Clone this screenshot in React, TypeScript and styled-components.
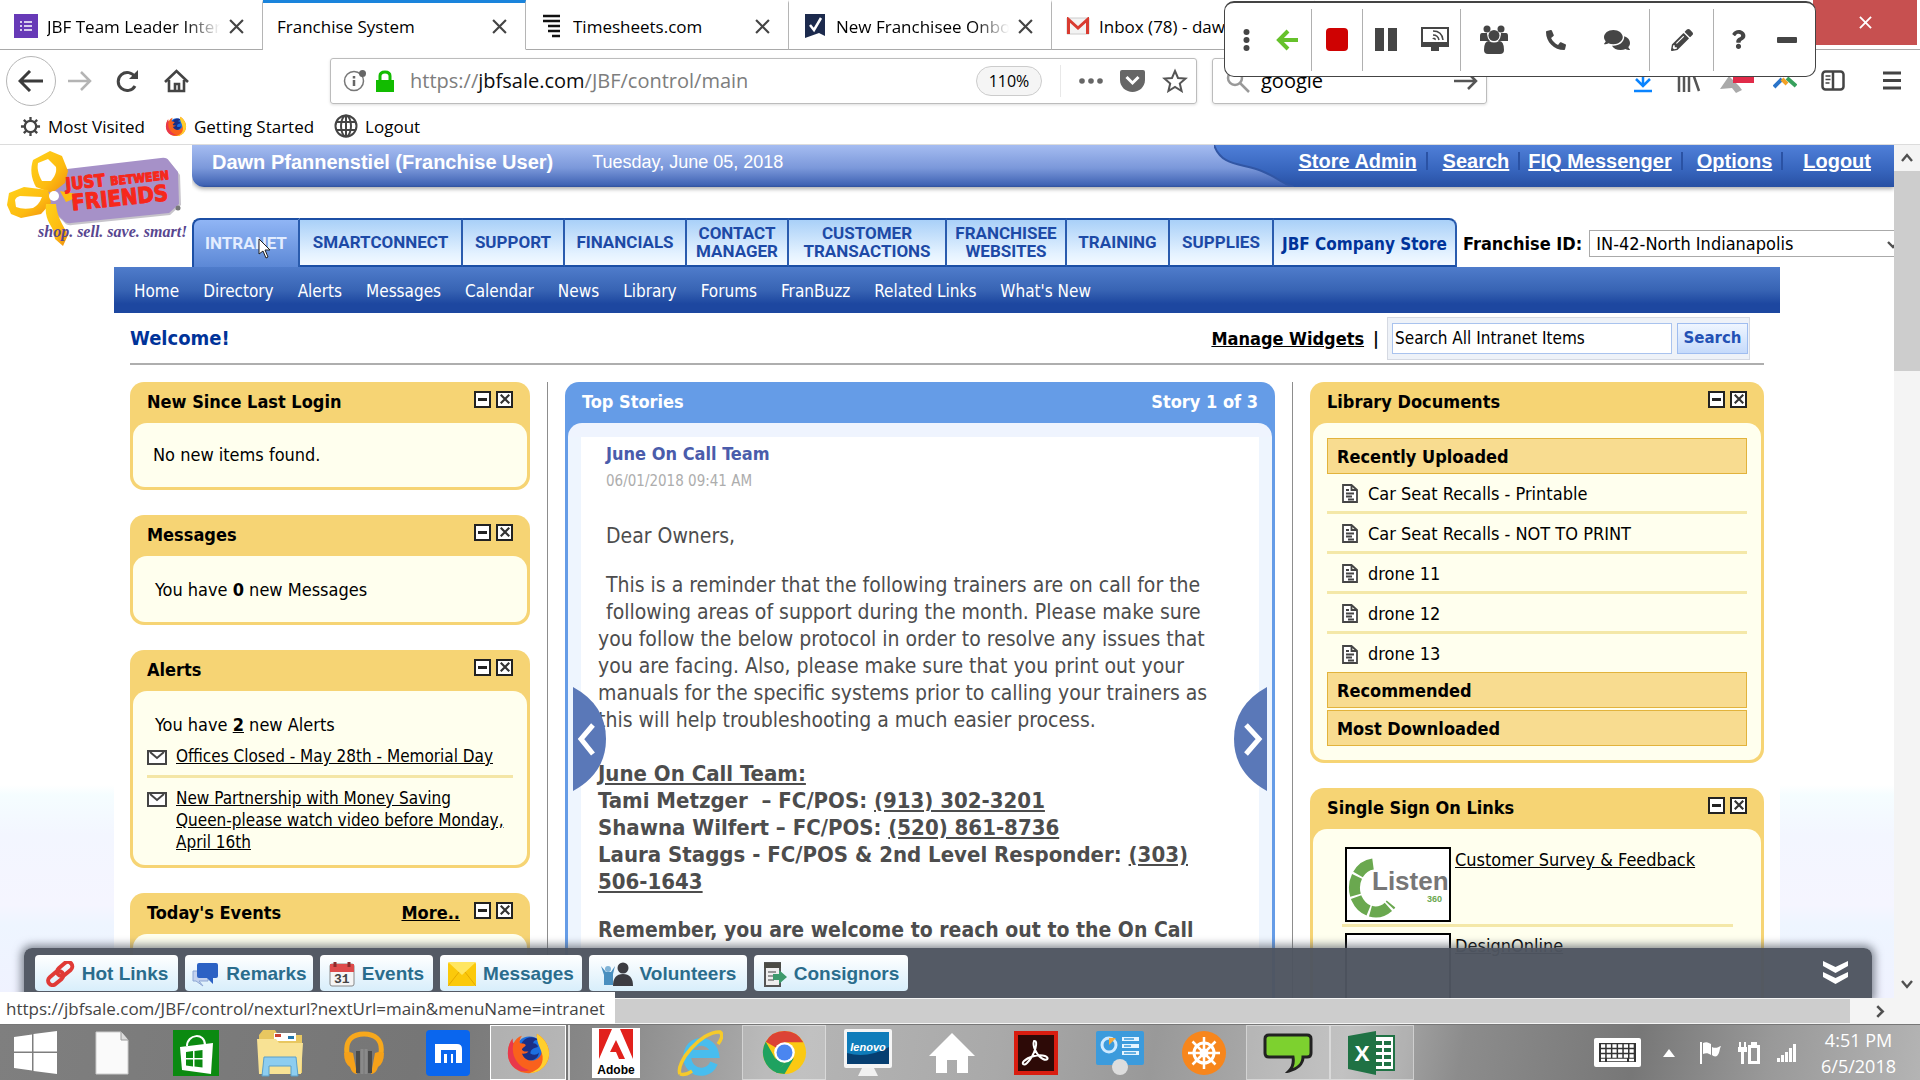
import React from "react";
import styled, { createGlobalStyle, css } from "styled-components";
import { FaPhone, FaComments, FaPencilAlt, FaQuestion } from "react-icons/fa";

const tahoma = `"DejaVu Sans Condensed", Tahoma, "Noto Sans", sans-serif`;
const segoe = `"Open Sans", "Segoe UI", "Noto Sans", sans-serif`;
const arial = `"Liberation Sans", Arial, sans-serif`;

const GlobalStyle = createGlobalStyle`
  * { box-sizing: border-box; }
  body { margin: 0; background: #fff; overflow: hidden; }
  button, input, select { font: inherit; color: inherit; margin: 0; }
  button { padding: 0; border: 0; background: none; cursor: pointer; }
  a { color: inherit; }
  h1, h2, h3, p, ul { margin: 0; padding: 0; font-weight: inherit; font-size: inherit; }
  ul { list-style: none; }
  svg { display: block; flex: none; }
`;

const Screen = styled.div`
  position: relative;
  display: flex;
  flex-direction: column;
  height: 100vh;
  overflow: hidden;
  font-family: ${tahoma};
  color: #000;
`;

/* ---------- Browser chrome ---------- */

const TabStrip = styled.div`
  display: flex;
  height: 50px;
  flex: none;
  font: 17px ${segoe};
`;

const BrowserTab = styled.div<{ $active?: boolean }>`
  display: flex;
  align-items: center;
  gap: 9px;
  width: 263px;
  flex: none;
  padding: 0 18px 0 14px;
  border-right: 1px solid #b5b5b5;
  border-bottom: 1px solid ${(p) => (p.$active ? "transparent" : "#a9a9a9")};
  border-top: 3px solid ${(p) => (p.$active ? "#1a84dc" : "transparent")};
`;

const TabLabel = styled.span<{ $fade?: boolean }>`
  flex: 1;
  overflow: hidden;
  white-space: nowrap;
  ${(p) =>
    p.$fade &&
    css`
      mask-image: linear-gradient(to right, #000 80%, transparent);
    `}
`;

const StripRest = styled.div`
  flex: 1;
  display: flex;
  justify-content: flex-end;
  align-items: flex-start;
  border-bottom: 1px solid #a9a9a9;
  padding-right: 3px;
`;

const WindowClose = styled.button`
  width: 104px;
  height: 45px;
  background: #c75050;
  display: grid;
  place-items: center;
`;

const NavBar = styled.div`
  display: flex;
  align-items: center;
  height: 58px;
  flex: none;
  padding: 3px 19px 0 6px;
  font: 20px ${segoe};
`;

const BackButton = styled.button`
  width: 50px;
  height: 50px;
  border: 1px solid #b6b6b6;
  border-radius: 50%;
  display: grid;
  place-items: center;
  flex: none;
`;

const NavButton = styled.button`
  width: 48px;
  height: 48px;
  display: grid;
  place-items: center;
  flex: none;
`;

const UrlBox = styled.div`
  display: flex;
  align-items: center;
  width: 867px;
  height: 46px;
  margin-left: 130px;
  padding: 0 8px 0 12px;
  border: 1px solid #bcbcbc;
  border-radius: 3px;
  box-shadow: 0 1px 3px #0002;
  gap: 9px;
`;

const UrlText = styled.div`
  flex: 1;
  margin-left: 6px;
  color: #7d7d7d;
  white-space: nowrap;
  b { font-weight: 400; color: #0c0c0d; }
`;

const ZoomPill = styled.button`
  width: 66px;
  height: 30px;
  border: 1px solid #ccc;
  border-radius: 15px;
  background: #f5f5f5;
  font-size: 16px;
  line-height: 26px;
`;

const PillRule = styled.span`
  width: 1px;
  height: 32px;
  background: #e8e8e8;
  margin: 0 9px;
`;

const UrlActions = styled.span`
  display: flex;
  align-items: center;
  gap: 17px;
`;

const SearchBox = styled.label`
  display: flex;
  align-items: center;
  width: 275px;
  height: 46px;
  margin-left: 15px;
  padding: 0 8px 0 13px;
  gap: 11px;
  border: 1px solid #bcbcbc;
  border-radius: 3px;
  box-shadow: 0 1px 3px #0002;
  input { flex: 1; min-width: 0; border: 0; outline: 0; padding: 0; background: none; }
`;

const ToolIcons = styled.div`
  display: flex;
  flex: 1;
  justify-content: flex-end;
  align-items: center;
  gap: 24px;
  svg:last-child { margin-left: 14px; }
`;

const Bookmarks = styled.nav`
  display: flex;
  align-items: center;
  height: 37px;
  flex: none;
  padding: 0 20px;
  gap: 20px;
  border-bottom: 1px solid #dcdcdc;
  font: 17px ${segoe};
`;

const Bookmark = styled.a`
  display: flex;
  align-items: center;
  gap: 7px;
  text-decoration: none;
`;

const Viewport = styled.div`
  display: flex;
  flex: 1;
  min-height: 0;
`;

const VScroll = styled.div`
  display: flex;
  flex-direction: column;
  align-items: center;
  width: 26px;
  flex: none;
  background: #f4f4f4;
  padding: 0 0 8px;
`;

const VThumb = styled.div`
  width: 100%;
  height: 200px;
  margin-bottom: auto;
  background: #cdcdcd;
`;

const ScrollCell = styled.button`
  display: grid;
  place-items: center;
  width: 26px;
  height: 26px;
  flex: none;
`;

const HScroll = styled.div`
  display: flex;
  align-items: center;
  height: 26px;
  flex: none;
  background: #f4f4f4;
  padding: 0 33px 0 26px;
`;

const HThumb = styled.div`
  flex: 1;
  height: 24px;
  background: #cdcdcd;
  margin-right: 24px;
`;

/* ---------- Web page ---------- */

const Page = styled.main`
  position: relative;
  flex: 1;
  min-width: 0;
  overflow: hidden;
  background: linear-gradient(#fff 0, #fff 640px, #f5fdff 650px, #f3f6ff 690px, #f5f5ff 760px, #eef5ff 780px, #f0f2ff 100%);
`;

const SiteHeader = styled.header`
  display: flex;
  height: 122px;
  background: #fff;
`;

const LogoBox = styled.a`
  width: 192px;
  flex: none;
`;

const HeaderMain = styled.div`
  display: flex;
  flex-direction: column;
  justify-content: space-between;
  flex: 1;
  min-width: 0;
  overflow: hidden;
`;

const UserBar = styled.div`
  display: flex;
  height: 42px;
  background: linear-gradient(#a5bcf1, #7b98da 55%, #4063b4 95%, #2f509c);
  border-bottom-left-radius: 12px;
  box-shadow: 0 2px 4px #0005;
  color: #fff;
  font: 18px ${arial};
`;

const UserText = styled.div`
  display: flex;
  align-items: center;
  flex: 1;
  gap: 39px;
  padding: 0 0 8px 20px;
  white-space: nowrap;
  b { font-size: 20px; }
`;

const UserLinks = styled.nav`
  display: flex;
  align-items: center;
  padding: 0 19px 10px 0;
  background: linear-gradient(#4f7fd8, #3765bd 60%, #2850a3);
  font: bold 20px ${arial};
  white-space: nowrap;
  a { padding: 0 4px; }
`;

const LinkRule = styled.span<{ $gap: number }>`
  width: 2px;
  height: 18px;
  margin: 0 ${(p) => p.$gap}px 0 5px;
  background: #2a52a4;
`;

const TabRow = styled.div`
  display: flex;
  align-items: stretch;
  height: 49px;
`;

const SiteTab = styled.a<{ $w: number; $active?: boolean; $store?: boolean }>`
  display: flex;
  align-items: center;
  justify-content: center;
  width: ${(p) => p.$w}px;
  flex: none;
  text-align: center;
  text-decoration: none;
  white-space: pre-line;
  font: bold 17px / 18px Roboto, ${arial};
  color: #1d4aa6;
  padding-bottom: 2px;
  background: linear-gradient(#a9d0f8, #e4f2ff 75%, #f4faff);
  border-top: 2px solid #1c4fa5;
  border-right: 2px solid #2a5cae;
  border-bottom: 2px solid #1c4fa5;
  ${(p) =>
    p.$active &&
    css`
      color: #e3edff;
      background: linear-gradient(#90b5f5, #5c88d6);
      border-left: 2px solid #1c4fa5;
      border-bottom: 0;
      border-top-left-radius: 8px;
    `}
  ${(p) =>
    p.$store &&
    css`
      font: bold 17px ${tahoma};
      color: #003399;
      padding: 2px 0 0;
      border-top-right-radius: 8px;
    `}
`;

const FranchisePicker = styled.label`
  display: flex;
  align-items: center;
  flex: none;
  gap: 7px;
  margin-left: 6px;
  padding-top: 2px;
  font: bold 18px ${tahoma};
  white-space: nowrap;
`;

const SelectWrap = styled.span`
  position: relative;
  width: 316px;
  font-weight: 400;
  select {
    width: 100%;
    height: 27px;
    appearance: none;
    border: 1px solid #aaa;
    background: #fff;
    padding: 0 6px;
  }
  svg { position: absolute; right: 6px; top: 9px; }
`;

const Container = styled.div`
  margin: 0 114px;
  background: #fff;
`;

const SubNav = styled.nav`
  display: flex;
  align-items: center;
  height: 46px;
  padding: 2px 20px 0;
  gap: 24px;
  background: linear-gradient(#4f7ccb, #3864b4 50%, #1d47a0 80%);
  color: #fff;
  font-size: 17px;
  a { text-decoration: none; white-space: nowrap; }
`;

const Inner = styled.div`
  padding: 0 16px;
`;

const WelcomeRow = styled.div`
  display: flex;
  align-items: center;
  height: 52px;
  padding: 0 14px 0 0;
  border-bottom: 2px solid #aeaeae;
  font-weight: 700;
  font-size: 18px;
  h1 { flex: 1; color: #003399; font-size: 20px; }
`;

const SearchFrame = styled.form`
  display: flex;
  gap: 5px;
  margin-left: 8px;
  padding: 5px 1px 5px 4px;
  border: 1px solid #d5d9e2;
  background: #eef2f8;
  input {
    width: 280px;
    height: 31px;
    border: 1px solid #a9c3ee;
    padding: 0 2px;
    font-weight: 400;
    font-size: 17px;
  }
  button {
    width: 71px;
    height: 31px;
    border: 1px solid #9fbdf0;
    background: linear-gradient(#eff6ff, #c5dafb);
    color: #2351b5;
    font: bold 15px "DejaVu Sans", sans-serif;
  }
`;

const Pipe = styled.span`
  margin-left: 9px;
`;

const Columns = styled.div`
  display: grid;
  grid-template-columns: 400px 1px minmax(0, 1fr) 1px 454px;
  column-gap: 17px;
  padding-top: 17px;
`;

const ColumnRule = styled.div`
  background: #8d8d8d;
`;

const Column = styled.div`
  display: flex;
  flex-direction: column;
  gap: 25px;
`;

const Card = styled.section<{ $blue?: boolean }>`
  border-radius: 14px;
  background: ${(p) => (p.$blue ? "#659ce7" : "#f6d474")};
  padding: 0 3px 3px;
`;

const CardHead = styled.header<{ $blue?: boolean }>`
  display: flex;
  align-items: center;
  height: 41px;
  gap: 5px;
  padding: 0 14px 3px 14px;
  font-weight: 700;
  font-size: 18px;
  color: ${(p) => (p.$blue ? "#fff" : "#000")};
  h2 { flex: 1; }
  a { margin-right: 9px; }
`;

const BoxButton = styled.button`
  display: grid;
  place-items: center;
  width: 17px;
  height: 17px;
  border: 2px solid #222;
  background: #fff;
  margin-bottom: 4px;
`;

const CardBody = styled.div<{ $h?: number; $pad?: string }>`
  min-height: ${(p) => p.$h ?? 0}px;
  border-radius: 14px 14px 12px 12px;
  background: #ffffee;
  padding: ${(p) => p.$pad ?? "18px 14px"};
  font-size: 18px;
  line-height: 22px;
`;

const Indented = styled.p`
  padding-left: 8px;
`;

const AlertList = styled.ul`
  margin-top: 9px;
  font-size: 17px;
`;

const AlertItem = styled.li`
  display: flex;
  gap: 9px;
  line-height: 22px;
  & + & { margin-top: 8px; padding-top: 9px; border-top: 3px solid #f4e6a6; }
  a { white-space: pre; }
  svg { margin-top: 5px; }
`;

const Section = styled.h3`
  display: flex;
  align-items: center;
  height: 36px;
  padding: 2px 0 0 9px;
  border: 1px solid #e2b33c;
  background: #f8dc90;
  font-weight: 700;
  & + & { margin-top: 2px; }
`;

const DocRow = styled.li`
  display: flex;
  align-items: center;
  gap: 10px;
  height: 40px;
  padding: 2px 0 0 15px;
  border-bottom: 3px solid #f4e8a8;
  &:last-child { border-bottom: 0; height: 38px; }
  a { text-decoration: none; }
`;

const SsoRow = styled.li`
  display: flex;
  gap: 4px;
  height: 86px;
  margin-right: 14px;
  padding: 6px 0 0 3px;
  border-bottom: 3px solid #f4e8a8;
  a { padding-top: 2px; }
  span {
    width: 106px;
    height: 75px;
    border: 2px solid #000;
    background: #fff;
  }
`;

const StoryBody = styled.div`
  position: relative;
  min-height: 640px;
  border-radius: 14px;
  background: linear-gradient(#eff4fe 14px, transparent 14px),
    linear-gradient(90deg, #eef5fe 13px, #fff 13px, #fff calc(100% - 13px), #eef5fe calc(100% - 13px));
  padding: 20px 30px 0;
`;

const StoryTitle = styled.h3`
  padding-left: 8px;
  font-weight: 700;
  font-size: 18px;
  line-height: 22px;
  color: #4a5cab;
`;

const StoryDate = styled.p`
  padding: 6px 0 0 8px;
  font-size: 15px;
  line-height: 20px;
  color: #adadad;
`;

const StoryText = styled.div`
  padding-top: 32px;
  font-size: 21px;
  line-height: 27px;
  color: #4d4d4d;
  white-space: nowrap;
`;

const Para = styled.p<{ $gap?: number; $size?: number }>`
  margin-top: ${(p) => p.$gap ?? 0}px;
  font-size: ${(p) => p.$size ?? 21}px;
`;

const Lead = styled.span<{ $below?: boolean }>`
  display: block;
  padding: 0 0 ${(p) => (p.$below ? 22 : 0)}px 8px;
`;

const StoryArrow = styled.button<{ $side: "left" | "right" }>`
  position: absolute;
  top: 264px;
  ${(p) => p.$side}: 5px;
  width: 33px;
  height: 104px;
`;

/* ---------- Page dock ---------- */

const Dock = styled.div`
  position: absolute;
  left: 24px;
  right: 22px;
  bottom: 0;
  display: flex;
  align-items: flex-start;
  gap: 7px;
  height: 50px;
  padding: 7px 24px 0 11px;
  border-radius: 8px 8px 0 0;
  background: rgba(78, 85, 96, 0.97);
  box-shadow: 0 0 8px 3px #4e5560aa;
`;

const DockButton = styled.button<{ $w: number }>`
  display: flex;
  align-items: center;
  justify-content: center;
  gap: 7px;
  width: ${(p) => p.$w}px;
  height: 36px;
  padding-top: 2px;
  border-radius: 4px;
  background: linear-gradient(#fff, #d8eefb);
  color: #2a6c8c;
  font: bold 19px ${arial};
`;

const DockToggle = styled.button`
  margin: 6px 0 0 auto;
`;

const StatusTip = styled.div`
  position: absolute;
  left: 0;
  bottom: 56px;
  height: 32px;
  padding: 0 10px 0 6px;
  background: #fff;
  color: #444;
  font: 17px / 34px ${segoe};
`;

const Pointer = styled.svg`
  position: absolute;
  left: 258px;
  top: 238px;
`;

/* ---------- Floating recorder ---------- */

const Recorder = styled.div`
  position: absolute;
  top: 1px;
  right: 104px;
  display: flex;
  align-items: center;
  width: 592px;
  height: 76px;
  border: 1px solid #444;
  border-top-width: 2px;
  border-radius: 10px;
  background: #fff;
  color: #454545;
`;

const RecGroup = styled.div<{ $w: number }>`
  display: flex;
  align-items: center;
  justify-content: space-around;
  width: ${(p) => p.$w}px;
  height: 62px;
  & + & { border-left: 1px solid #b0b0b0; }
  &:first-child { padding-left: 5px; }
`;

const Handset = styled(FaPhone)`
  transform: scaleX(-1);
`;

/* ---------- Taskbar ---------- */

const Taskbar = styled.footer`
  display: flex;
  height: 56px;
  flex: none;
  border-top: 1px solid #777;
  background: linear-gradient(100deg, #7f7f7f 0, #767676 22%, #8a8a8a 32%, #b4b4b4 42%, #a9a9a9 52%, #999 60%, #b5b5b5 70%, #8c8c8c 76%, #777 85%, #999 92%, #b4b4b4 100%);
  color: #fff;
  font: 17px ${segoe};
`;

const Start = styled.button`
  display: grid;
  place-items: center;
  width: 70px;
`;

const Task = styled.button<{ $open?: boolean; $front?: boolean }>`
  display: grid;
  place-items: center;
  width: 84px;
  ${(p) =>
    p.$open &&
    css`
      background: #ffffff2e;
      box-shadow: inset 0 0 0 1px #ffffff66;
    `}
  ${(p) =>
    p.$front &&
    css`
      width: 76px;
      margin-right: 8px;
      background: #ffffff66;
      box-shadow: inset 0 0 0 1px #fff, 2px 0 0 #777, 4px 0 0 #ddd;
    `}
`;

const Tray = styled.div`
  display: flex;
  align-items: center;
  gap: 16px;
  margin-left: auto;
  padding-right: 24px;
`;

const TrayUp = styled.button`
  padding: 0 9px 0 6px;
`;

const Clock = styled.div`
  padding-left: 8px;
  text-align: center;
  font-size: 18px;
  line-height: 26px;
`;

/* ---------- Icons ---------- */

const Cross = ({ s = 15, c = "#444", w = 2 }) => (
  <svg width={s} height={s} viewBox="0 0 14 14" stroke={c} strokeWidth={w} fill="none">
    <path d="M1 1l12 12M13 1L1 13" />
  </svg>
);

const Chevron = ({ d, s = 12 }: { d: string; s?: number }) => (
  <svg width={s} height={s} viewBox="0 0 12 12" fill="none" stroke="#505050" strokeWidth="2.4">
    <path d={d} />
  </svg>
);

const Firefox = ({ s }: { s: number }) => (
  <svg width={s} height={s} viewBox="0 0 48 48">
    <circle cx="25" cy="22" r="15" fill="#1c6fe0" />
    <path d="M18 12c4-5 12-6 17-1-4-1-6 1-6 3 3 0 5 2 5 4-5 1-8 3-8 7 3 2 7 2 9-1 0 7-9 11-16 7-5-3-7-12-1-19z" fill="#1a2f86" />
    <path d="M33 4c5 3 13 10 13 21 0 12-10 21-22 21S2 37 2 25C2 18 4 13 7 9c0 2 0 4 1 5 2-4 5-7 9-8-2 3-3 6-2 8 3 0 6 1 6 2 0 2-4 3-4 5 1 2 4 2 7 2-2 2-5 3-7 2 2 6 8 9 14 7 6-2 9-9 6-15-1-5-5-7-4-13z" fill="#f9611c" />
    <path d="M33 4c5 3 13 10 13 21 0 12-10 21-21 21 9-3 15-8 14-18-1-8-7-14-6-24z" fill="#ffcf2d" />
    <path d="M2 25c0-7 2-12 5-16 0 2 0 4 1 5-3 12 3 25 17 29C12 47 2 37 2 25z" fill="#e32b5b" opacity=".75" />
  </svg>
);

const Doc = () => (
  <svg width="16" height="19" viewBox="0 0 16 19" fill="#fff" stroke="#444" strokeWidth="1.8">
    <path d="M1 1h8.500l5.500 5v12H1zM9.500 1v5H15" />
    <path d="M4 6h3M4 9.500h8M4 12.500h6M6 15.500h6" />
  </svg>
);

const Envelope = () => (
  <svg width="20" height="15" viewBox="0 0 20 15" fill="#fff" stroke="#444" strokeWidth="2">
    <path d="M1 1h18v13H1z" />
    <path d="M3 2l7 6 7-6" fill="none" />
  </svg>
);

const Logo = () => (
  <svg width="190" height="106" viewBox="0 0 190 106">
    <defs>
      <linearGradient id="ribbon" x1="0" y1="0" x2="1" y2="1">
        <stop offset="0" stopColor="#ffd21a" /><stop offset=".6" stopColor="#fdbb10" /><stop offset="1" stopColor="#f08c10" />
      </linearGradient>
    </defs>
    <path d="M48 44L68 26l94-12q5-1 8 3l10 13 1 30-11 10-98 10q-5 1-8-3L46 61z" fill="#8f8a98" opacity=".5" />
    <path d="M47 43L67 24l94-11q6-1 8 3l9 11 1 32-10 9-98 10q-5 1-8-3L45 59z" fill="#a691c8" />
    <path d="M36 42c-5-9-6-18-3-27L50 6l12 5 6 15-3 12-13 10z" fill="url(#ribbon)" />
    <path d="M42 36c-4-7-5-13-4-18l10-4 8 8c1 6-2 10-5 14z" fill="#fff" />
    <path d="M48 45L24 42 9 48 7 60l4 9 10 4 20-4 10-11z" fill="url(#ribbon)" />
    <path d="M42 52L20 51q-4 1-5 4l1 7q7 3 17 1 6-3 9-11z" fill="#fff" />
    <path d="M46 59c-2 14 5 21 7 26l2 9 8 7 5-11c-5-10-11-18-12-31z" fill="url(#ribbon)" />
    <path d="M60 46l22 4-16 7z" fill="#fdbb10" />
    <circle cx="54" cy="51" r="5" fill="#fff" />
    <g transform="rotate(-6 66 44)" fill="#f6281b" stroke="#f6281b" strokeWidth="1" strokeLinejoin="round" fontFamily="DejaVu Sans Condensed" fontWeight="700">
      <text x="66" y="45" fontSize="17">JUST</text>
      <text x="111" y="45" fontSize="12">BETWEEN</text>
      <text x="70" y="66" fontSize="22">FRIENDS</text>
    </g>
    <circle cx="178" cy="63" r="2.500" fill="#777" />
    <text x="38" y="92" fontFamily="Liberation Serif" fontStyle="italic" fontWeight="700" fontSize="16" fill="#58468f">shop. sell. save. smart!</text>
  </svg>
);

const People = () => (
  <svg width="28" height="30" viewBox="0 0 28 30" fill="#454545">
    <circle cx="7" cy="4" r="3.500" /><circle cx="21" cy="4" r="3.500" />
    <circle cx="14" cy="10.500" r="5.500" />
    <path d="M0 16V11q0-3 2-3h5q0 5 3 8zM28 16v-5q0-3-2-3h-5q0 5-3 8z" />
    <path d="M4 25q0-9 5-9 5 3 10 0 5 0 5 9 0 4-4 4H8q-4 0-4-4z" />
  </svg>
);

const DockIcon = ({ kind }: { kind: string }) => {
  switch (kind) {
    case "link":
      return (
        <svg width="30" height="26" viewBox="0 0 30 26" fill="none" stroke="#e03a36" strokeWidth="4">
          <rect x="11" y="4" width="17" height="9" rx="4.500" transform="rotate(-40 19 8)" />
          <rect x="2" y="13" width="17" height="9" rx="4.500" transform="rotate(-40 10 17)" />
        </svg>
      );
    case "remarks":
      return (
        <svg width="28" height="25" viewBox="0 0 28 25">
          <path d="M2 9h15v10H8l4 5-7-5H2z" fill="#c3d2ee" stroke="#8ca6d4" />
          <path d="M8 1h17q2 0 2 2v11q0 2-2 2h-3v6l-6-6H8q-2 0-2-2V3q0-2 2-2z" fill="#2c62c4" />
        </svg>
      );
    case "events":
      return (
        <svg width="26" height="26" viewBox="0 0 26 26">
          <rect x="1" y="3" width="24" height="22" rx="2" fill="#f5f5f5" stroke="#888" />
          <path d="M1 3h24v8H1z" fill="#de4b4b" />
          <path d="M6 1v5M20 1v5" stroke="#8a2b2b" strokeWidth="3" />
          <text x="5" y="22" fontSize="13" fontFamily="Liberation Mono" fontWeight="700" fill="#444">31</text>
        </svg>
      );
    case "mail":
      return (
        <svg width="28" height="24" viewBox="0 0 28 24">
          <rect width="28" height="24" rx="2" fill="#fbc90b" />
          <path d="M0 0h28L14 13z" fill="#ffe661" /><path d="M0 24L11 10M28 24L17 10" stroke="#e5a800" />
        </svg>
      );
    case "people":
      return (
        <svg width="33" height="24" viewBox="0 0 33 24">
          <path d="M1 4l3 9v10h9V12l2-8-4 6H6z" fill="#4a8fbf" /><circle cx="8" cy="7" r="3" fill="#7fb3d7" />
          <circle cx="23" cy="6" r="5.500" fill="#3c3c42" /><path d="M13 24q0-12 10-12t10 12z" fill="#3c3c42" />
        </svg>
      );
    default:
      return (
        <svg width="24" height="25" viewBox="0 0 24 25">
          <path d="M2 1h15v23H2z" fill="#eee" stroke="#555" strokeWidth="2" />
          <path d="M1 1h17v5H1z" fill="#4b4b45" /><path d="M5 10h8M5 14h5M5 18h6" stroke="#999" strokeWidth="2" />
          <path d="M10 12h6V8l8 7-8 7v-4h-6z" fill="#3d9a6c" />
        </svg>
      );
  }
};

const TaskIcon = ({ kind }: { kind: string }) => {
  switch (kind) {
    case "file":
      return <svg width="34" height="44" viewBox="0 0 34 44"><path d="M1 1h25l7 8v34H1z" fill="#fafafa" stroke="#ccc" /><path d="M26 1v8h7" fill="#ddd" stroke="#999" /></svg>;
    case "store":
      return (
        <svg width="46" height="46" viewBox="0 0 46 46">
          <path d="M0 0h46v46H0z" fill="#0b8a11" /><path d="M14 16c0-12 18-14 18-1" fill="none" stroke="#fff" strokeWidth="2" />
          <path d="M7 17l33-4-2 31-29-4z" fill="#fff" /><path d="M13 22l7-1v7l-7 0zM21.500 21l8-1v8h-8zM13 29.500h7v7l-7-1zM21.500 29.500h8v8l-8-1z" fill="#0b8a11" />
        </svg>
      );
    case "folder":
      return (
        <svg width="48" height="48" viewBox="0 0 48 48">
          <path d="M3 6l4-5h12l3 5h24v38H3z" fill="#e8c760" /><path d="M18 4h22v8H18z" fill="#fff" /><path d="M19 5h6v3h-6z" fill="#c43" /><path d="M32 7h6v3h-6z" fill="#27a" />
          <path d="M1 10h19l3 4h24l-2 31H3z" fill="#f8e294" /><path d="M6 47l2-19h32l2 19h-7V37H13v10z" fill="#8dcdf0" stroke="#5b9fc9" />
        </svg>
      );
    case "phones":
      return (
        <svg width="42" height="44" viewBox="0 0 42 44">
          <path d="M4 22C2 8 11 3 21 3s19 5 17 19" fill="none" stroke="#f7a81c" strokeWidth="5" />
          <path d="M1 22q4-2 9 0l4 21q-5 0-7-7-6-4-6-14zM41 22q-4-2-9 0l-4 21q5 0 7-7 6-4 6-14z" fill="#f5a11a" />
          <path d="M15 20v22M27 20v22" stroke="#4a4a4a" strokeWidth="4" /><path d="M19 18v25M23 18v25" stroke="#8a8a8a" strokeWidth="3" />
        </svg>
      );
    case "max":
      return <svg width="44" height="46" viewBox="0 0 44 46"><rect width="44" height="46" rx="4" fill="#0a66ee" /><path d="M9 33V14h22q5 0 5 5v14h-6V21H18v12h-3V21v12z" fill="#fff" /><path d="M15 20h15v13h-3v-8h-6v8h-6z" fill="#0a66ee" /><path d="M18 24h3v9h-3zM25 24h2v9h-2z" fill="#fff" /></svg>;
    case "firefox":
      return <Firefox s={45} />;
    case "adobe":
      return (
        <svg width="48" height="50" viewBox="0 0 48 50">
          <path d="M0 0h48v50H0z" fill="#fff" /><path d="M7 1h13L7 31zM28 1h13v30zM24 12l9 19h-6l-3-7h-6z" fill="#e2211c" />
          <text x="24" y="46" textAnchor="middle" fontFamily="Liberation Sans" fontWeight="700" fontSize="12">Adobe</text>
        </svg>
      );
    case "ie":
      return (
        <svg width="46" height="48" viewBox="0 0 46 48" fill="none">
          <path d="M37 34a14 15 0 1 1 1-9H14" stroke="#48bdee" strokeWidth="8" />
          <path d="M3 45C-2 34 24 2 43 3c4 3 1 8-2 12M3 45c5 2 9-1 12-3" stroke="#f6ca2a" strokeWidth="3.500" />
        </svg>
      );
    case "chrome":
      return (
        <svg width="45" height="45" viewBox="0 0 48 48">
          <circle cx="24" cy="24" r="23" fill="#fbc913" />
          <path d="M24 24L4 12.500A23 23 0 0 1 44 13H24z" fill="#dc4335" /><path d="M4 12.500L14 30l10 5-8 10.600A23 23 0 0 1 4 12.500z" fill="#1fa260" />
          <path d="M24 35l-9 10.500 9 1.500 10-17z" fill="#1fa260" /><circle cx="24" cy="24" r="11" fill="#fff" /><circle cx="24" cy="24" r="8.500" fill="#4a86f0" />
        </svg>
      );
    case "lenovo":
      return (
        <svg width="48" height="48" viewBox="0 0 48 48">
          <rect x="0" y="0" width="48" height="39" rx="2" fill="#f5f5f5" /><path d="M3 3h42v32H3z" fill="#0f7cba" /><path d="M3 24q20 6 42-6v17H3z" fill="#073f71" />
          <text x="24" y="22" textAnchor="middle" fontFamily="Liberation Sans" fontWeight="700" fontStyle="italic" fontSize="11" fill="#fff">lenovo</text>
          <path d="M18 39h12l4 8H14z" fill="#f1f1f1" />
        </svg>
      );
    case "home":
      return <svg width="48" height="42" viewBox="0 0 48 42"><path d="M24 1l23 23h-7v17H29V28H19v13H8V24H1z" fill="#fff" /></svg>;
    case "acrobat":
      return (
        <svg width="44" height="44" viewBox="0 0 44 44">
          <path d="M0 0h44v44H0z" fill="#d91d10" /><path d="M4 4h36v36H4z" fill="#2d0a07" />
          <path d="M20 10c5-1 1 14-7 22-3 3-6 1-3-2 4-4 14-7 21-5 5 2 2 5-2 3-6-3-11-13-9-18z" fill="none" stroke="#fff" strokeWidth="2" />
        </svg>
      );
    case "panel":
      return (
        <svg width="48" height="44" viewBox="0 0 48 44">
          <rect width="48" height="34" rx="2" fill="#3c9bdc" /><circle cx="13" cy="14" r="7" fill="none" stroke="#cfeaff" strokeWidth="3" /><path d="M13 14V7h7z" fill="#f4a93b" />
          <path d="M26 8h17M26 15h17M26 22h17" stroke="#e6f5ff" strokeWidth="4" /><path d="M28 8h10M28 15h7M28 22h12" stroke="#3c9bdc" strokeWidth="1.500" /><circle cx="24" cy="36" r="8" fill="#ddd" />
        </svg>
      );
    case "wheel":
      return (
        <svg width="44" height="44" viewBox="0 0 44 44" fill="none" stroke="#fff" strokeWidth="3">
          <circle cx="22" cy="22" r="22" fill="#f7861c" stroke="none" /><circle cx="22" cy="22" r="10" /><circle cx="22" cy="22" r="3" />
          <path d="M22 6v32M6 22h32M10.500 10.500l23 23M33.500 10.500l-23 23" strokeWidth="2.500" />
        </svg>
      );
    case "chat":
      return <svg width="50" height="40" viewBox="0 0 50 40"><path d="M6 2h38q4 0 4 4v14q0 4-4 4h-4c0 7-6 12-14 14 4-4 5-8 4-14H6q-4 0-4-4V6q0-4 4-4z" fill="#7dd12f" stroke="#222" strokeWidth="3" /></svg>;
    default:
      return (
        <svg width="48" height="44" viewBox="0 0 48 44">
          <path d="M24 5h22v34H24z" fill="#fff" stroke="#1f7244" strokeWidth="2" /><path d="M28 12h15M28 19h15M28 26h15M28 33h15" stroke="#1f7244" strokeWidth="4" /><path d="M35 7v30" stroke="#fff" strokeWidth="2" />
          <path d="M0 5l28-5v44L0 38z" fill="#1f7244" /><text x="14" y="30" textAnchor="middle" fontFamily="Open Sans" fontWeight="700" fontSize="22" fill="#fff">X</text>
        </svg>
      );
  }
};

/* ---------- Data ---------- */

const siteTabs: [string, number][] = [
  ["SMARTCONNECT", 163],
  ["SUPPORT", 102],
  ["FINANCIALS", 122],
  ["CONTACT\nMANAGER", 102],
  ["CUSTOMER\nTRANSACTIONS", 158],
  ["FRANCHISEE\nWEBSITES", 120],
  ["TRAINING", 103],
  ["SUPPLIES", 104],
];
const subNav = ["Home", "Directory", "Alerts", "Messages", "Calendar", "News", "Library", "Forums", "FranBuzz", "Related Links", "What's New"];
const docs = ["Car Seat Recalls - Printable", "Car Seat Recalls - NOT TO PRINT", "drone 11", "drone 12", "drone 13"];
const dock: [string, string, number][] = [
  ["Hot Links", "link", 143],
  ["Remarks", "remarks", 128],
  ["Events", "events", 113],
  ["Messages", "mail", 142],
  ["Volunteers", "people", 158],
  ["Consignors", "book", 154],
];
const tasks = ["file", "store", "folder", "phones", "max", "firefox", "adobe", "ie", "chrome", "lenovo", "home", "acrobat", "panel", "wheel", "chat", "excel"];

const HeadButtons = () => (
  <>
    <BoxButton aria-label="Minimize">
      <svg width="9" height="3"><path d="M0 0h9v3H0z" fill="#222" /></svg>
    </BoxButton>
    <BoxButton aria-label="Close">
      <Cross s={10} c="#333" w={3} />
    </BoxButton>
  </>
);

type WidgetProps = { title: string; more?: boolean; h?: number; pad?: string; children?: React.ReactNode };
const Widget = ({ title, more, h, pad, children }: WidgetProps) => (
  <Card>
    <CardHead>
      <h2>{title}</h2>
      {more && <a href="#more">More..</a>}
      <HeadButtons />
    </CardHead>
    <CardBody $h={h} $pad={pad}>{children}</CardBody>
  </Card>
);

const Browser = () => (
  <>
    <TabStrip>
      <BrowserTab>
        <svg width="24" height="24" viewBox="0 0 24 24"><path d="M0 0h24v24H0z" fill="#673ab7" /><path d="M6 8h2M6 12h2M6 16h2M10 8h8M10 12h8M10 16h8" stroke="#fff" strokeWidth="1.500" /></svg>
        <TabLabel $fade>JBF Team Leader Interview</TabLabel>
        <Cross />
      </BrowserTab>
      <BrowserTab $active>
        <TabLabel>Franchise System</TabLabel>
        <Cross />
      </BrowserTab>
      <BrowserTab>
        <svg width="24" height="24" viewBox="0 0 24 24" stroke="#111" strokeWidth="2.500"><path d="M3 2h17M3 7h17M8 12h12M8 17h12M12 22h8" /></svg>
        <TabLabel>Timesheets.com</TabLabel>
        <Cross />
      </BrowserTab>
      <BrowserTab>
        <svg width="24" height="24" viewBox="0 0 24 24"><path d="M2 0h20v22l-6-3-14 5z" fill="#1c2a4d" /><path d="M7 11l4 5 7-12" stroke="#fff" strokeWidth="2.500" fill="none" /></svg>
        <TabLabel $fade>New Franchisee Onboard</TabLabel>
        <Cross />
      </BrowserTab>
      <BrowserTab>
        <svg width="24" height="18" viewBox="0 0 24 18"><path d="M1 1h22v16H1z" fill="#f3f3f3" stroke="#ccc" /><path d="M2.500 17V2.500L12 11l9.500-8.500V17" fill="none" stroke="#d93b30" strokeWidth="3" /></svg>
        <TabLabel>Inbox (78) - dawn@jbf</TabLabel>
      </BrowserTab>
      <StripRest>
        <WindowClose aria-label="Close window"><Cross s={13} c="#fff" /></WindowClose>
      </StripRest>
    </TabStrip>
    <NavBar>
      <BackButton aria-label="Back">
        <svg width="26" height="22" viewBox="0 0 26 22" fill="none" stroke="#3b3b3b" strokeWidth="3"><path d="M25 11H3M12 1L2 11l10 10" /></svg>
      </BackButton>
      <NavButton aria-label="Forward">
        <svg width="24" height="20" viewBox="0 0 24 20" fill="none" stroke="#b4b4b4" strokeWidth="2.500"><path d="M0 10h22M13 1l9 9-9 9" /></svg>
      </NavButton>
      <NavButton aria-label="Reload">
        <svg width="24" height="24" viewBox="0 0 24 24" fill="none" stroke="#444" strokeWidth="3"><path d="M19 17a9 9 0 1 1 0-9" /><path d="M22 1v9h-9z" fill="#444" stroke="none" /></svg>
      </NavButton>
      <NavButton aria-label="Home">
        <svg width="25" height="24" viewBox="0 0 25 24" fill="none" stroke="#444" strokeWidth="2.600"><path d="M1 13L12.500 2 24 13M5 11v11h15V11M11 22v-7h4v7" /></svg>
      </NavButton>
      <UrlBox>
        <svg width="23" height="22" viewBox="0 0 23 22"><circle cx="11" cy="11" r="9.500" fill="none" stroke="#777" strokeWidth="1.500" /><path d="M11 10v6M11 6v2.500" stroke="#666" strokeWidth="2.500" /><circle cx="19.500" cy="3.500" r="3.500" fill="#666" /></svg>
        <svg width="20" height="22" viewBox="0 0 20 22"><path d="M1 10h18v12H1z" fill="#12bc00" /><path d="M5 11V6q0-4 5-4t5 4v5" fill="none" stroke="#12bc00" strokeWidth="3" /></svg>
        <UrlText>https://<b>jbfsale.com</b>/JBF/control/main</UrlText>
        <ZoomPill>110%</ZoomPill>
        <PillRule />
        <UrlActions>
          <svg width="24" height="6" viewBox="0 0 24 6" fill="#666"><circle cx="3" cy="3" r="2.800" /><circle cx="12" cy="3" r="2.800" /><circle cx="21" cy="3" r="2.800" /></svg>
          <svg width="25" height="22" viewBox="0 0 25 22"><path d="M2 0h21q2 0 2 2v8c0 7-6 12-12.500 12S0 17 0 10V2q0-2 2-2z" fill="#666" /><path d="M6.500 7l6 6 6-6" stroke="#fff" strokeWidth="3" fill="none" /></svg>
          <svg width="26" height="25" viewBox="0 0 26 25"><path d="M13 3l3 7 7.500.6-5.700 5 1.800 7.400-6.600-4-6.600 4 1.800-7.400-5.700-5L10 10z" fill="none" stroke="#555" strokeWidth="2" /></svg>
        </UrlActions>
      </UrlBox>
      <SearchBox>
        <svg width="24" height="24" viewBox="0 0 24 24" fill="none" stroke="#999" strokeWidth="2.500"><circle cx="9" cy="9" r="7" /><path d="M14 14l9 9" /></svg>
        <input aria-label="Search the web" defaultValue="google" />
        <svg width="24" height="18" viewBox="0 0 24 18" fill="none" stroke="#555" strokeWidth="2.500"><path d="M0 9h22M14 1l8 8-8 8" /></svg>
      </SearchBox>
      <ToolIcons>
        <svg width="20" height="24" viewBox="0 0 20 24" fill="none" stroke="#0a84ff" strokeWidth="2.500"><path d="M10 1v16M3 10l7 7 7-7M1 22h18" /></svg>
        <svg width="24" height="22" viewBox="0 0 24 22" stroke="#555" strokeWidth="2.500"><path d="M2 0v22M7 0v22M12 0v22M15 1l7 20" /></svg>
        <svg width="24" height="24" viewBox="4 0 30 24" preserveAspectRatio="xMidYMid slice" overflow="visible"><path d="M2 20l9-13 10 10 3 4-6 3-4-5z" fill="#aaa" /><path d="M15 8h21v6H15z" fill="#e12b49" /></svg>
        <svg width="24" height="22" viewBox="0 0 24 22" fill="none" strokeWidth="4"><path d="M1 17l8-8" stroke="#2a74c9" /><path d="M9 9l5 5" stroke="#f2a126" /><path d="M14 8l9 8" stroke="#37a05c" /></svg>
        <svg width="24" height="21" viewBox="0 0 24 21" fill="none" stroke="#444" strokeWidth="2.500"><rect x="1.500" y="1.500" width="21" height="18" rx="3" /><path d="M12 1v19" /><path d="M4.500 6h5M4.500 9.500h5M4.500 13h4" strokeWidth="1.500" /></svg>
        <svg width="18" height="19" viewBox="0 0 18 19" stroke="#444" strokeWidth="3"><path d="M0 2h18M0 9.500h18M0 17h18" /></svg>
      </ToolIcons>
    </NavBar>
    <Bookmarks>
      <Bookmark href="#visited">
        <svg width="21" height="21" viewBox="0 0 22 22" fill="none" stroke="#444" strokeWidth="2.400"><circle cx="11" cy="11" r="6" /><path d="M11 1v4M11 17v4M1 11h4M17 11h4M4 4l3 3M15 15l3 3M18 4l-3 3M7 15l-3 3" /></svg>
        Most Visited
      </Bookmark>
      <Bookmark href="#start"><Firefox s={22} />Getting Started</Bookmark>
      <Bookmark href="#logout">
        <svg width="24" height="24" viewBox="0 0 24 24" fill="none" stroke="#444" strokeWidth="2"><circle cx="12" cy="12" r="10.500" /><ellipse cx="12" cy="12" rx="5" ry="10.500" /><path d="M2 8h20M2 16h20M12 1v22" /></svg>
        Logout
      </Bookmark>
    </Bookmarks>
  </>
);

const Header = () => (
  <SiteHeader>
    <LogoBox href="#home" aria-label="Just Between Friends"><Logo /></LogoBox>
    <HeaderMain>
      <UserBar>
        <UserText><b>Dawn Pfannenstiel (Franchise User)</b><span>Tuesday, June 05, 2018</span></UserText>
        <svg width="80" height="42" viewBox="0 0 84 42" preserveAspectRatio="none">
          <defs><linearGradient id="swoosh" gradientUnits="userSpaceOnUse" x1="0" y1="0" x2="0" y2="42"><stop offset="0" stopColor="#4f7fd8" /><stop offset=".6" stopColor="#3765bd" /><stop offset="1" stopColor="#2850a3" /></linearGradient></defs>
          <path d="M0 0C8 22 30 18 50 26S70 38 84 42V0z" fill="url(#swoosh)" />
          <path d="M0 0C8 22 30 18 50 26S70 38 84 42" fill="none" stroke="#3156a4" strokeWidth="2" />
        </svg>
        <UserLinks>
          <a href="#admin">Store Admin</a><LinkRule $gap={11} />
          <a href="#search">Search</a><LinkRule $gap={4} />
          <a href="#fiq">FIQ Messenger</a><LinkRule $gap={10} />
          <a href="#options">Options</a><LinkRule $gap={16} />
          <a href="#out">Logout</a>
        </UserLinks>
      </UserBar>
      <TabRow>
        <SiteTab href="#intranet" $w={108} $active>INTRANET</SiteTab>
        {siteTabs.map(([label, w]) => (
          <SiteTab href={"#" + label} key={label} $w={w}>{label}</SiteTab>
        ))}
        <SiteTab href="#store" $w={183} $store>JBF Company Store</SiteTab>
        <FranchisePicker>
          Franchise ID:
          <SelectWrap>
            <select defaultValue="IN-42"><option value="IN-42">IN-42-North Indianapolis</option></select>
            <Chevron d="M1 3l5 5 5-5" />
          </SelectWrap>
        </FranchisePicker>
      </TabRow>
    </HeaderMain>
  </SiteHeader>
);

const Story = () => (
  <Card $blue>
    <CardHead $blue><h2>Top Stories</h2><span>Story 1 of 3</span></CardHead>
    <StoryBody>
      <StoryTitle>June On Call Team</StoryTitle>
      <StoryDate>06/01/2018 09:41 AM</StoryDate>
      <StoryText>
        <Para>
          <Lead $below>Dear Owners,</Lead>
          <Lead>This is a reminder that the following trainers are on call for the</Lead>
          <Lead>following areas of support during the month. Please make sure</Lead>
          you follow the below protocol in order to resolve any issues that<br />
          you are facing. Also, please make sure that you print out your<br />
          manuals for the specific systems prior to calling your trainers as<br />
          this will help troubleshooting a much easier process.
        </Para>
        <Para $gap={26} $size={22}>
          <b>
            <u>June On Call Team:</u><br />
            Tami Metzger&nbsp; – FC/POS: <u>(913) 302-3201</u><br />
            Shawna Wilfert – FC/POS: <u>(520) 861-8736</u><br />
            Laura Staggs - FC/POS &amp; 2nd Level Responder: <u>(303)<br />506-1643</u>
          </b>
        </Para>
        <Para $gap={22}><b>Remember, you are welcome to reach out to the On Call</b></Para>
      </StoryText>
      <StoryArrow $side="left" aria-label="Previous story">
        <svg width="33" height="104" viewBox="0 0 33 104"><path d="M0 0Q33 18 33 52T0 104z" fill="#5a78b8" /><path d="M20 38L8 52l12 15" fill="none" stroke="#fff" strokeWidth="5" /></svg>
      </StoryArrow>
      <StoryArrow $side="right" aria-label="Next story">
        <svg width="33" height="104" viewBox="0 0 33 104"><path d="M33 0Q0 18 0 52t33 52z" fill="#5a78b8" /><path d="M12 38l13 14-13 15" fill="none" stroke="#fff" strokeWidth="5" /></svg>
      </StoryArrow>
    </StoryBody>
  </Card>
);

export default function App() {
  return (
    <Screen>
      <GlobalStyle />
      <Browser />
      <Viewport>
        <Page>
          <Header />
          <Container>
            <SubNav>{subNav.map((n) => <a key={n} href={"#" + n}>{n}</a>)}</SubNav>
            <Inner>
              <WelcomeRow>
                <h1>Welcome!</h1>
                <a href="#widgets">Manage Widgets</a>
                <Pipe>|</Pipe>
                <SearchFrame>
                  <input aria-label="Search intranet" defaultValue="Search All Intranet Items" />
                  <button type="button">Search</button>
                </SearchFrame>
              </WelcomeRow>
              <Columns>
                <Column>
                  <Widget title="New Since Last Login" h={63} pad="21px 20px">No new items found.</Widget>
                  <Widget title="Messages" h={66} pad="23px 14px 21px">
                    <Indented>You have <b>0</b> new Messages</Indented>
                  </Widget>
                  <Widget title="Alerts" h={174} pad="23px 14px 12px">
                    <Indented>You have <b><u>2</u></b> new Alerts</Indented>
                    <AlertList>
                      <AlertItem><Envelope /><a href="#a1">Offices Closed - May 28th - Memorial Day</a></AlertItem>
                      <AlertItem><Envelope /><a href="#a2">{"New Partnership with Money Saving\nQueen-please watch video before Monday,\nApril 16th"}</a></AlertItem>
                    </AlertList>
                  </Widget>
                  <Widget title="Today's Events" more h={100} />
                </Column>
                <ColumnRule />
                <Story />
                <ColumnRule />
                <Column>
                  <Widget title="Library Documents" pad="15px 14px 14px">
                    <Section>Recently Uploaded</Section>
                    <ul>
                      {docs.map((d) => <DocRow key={d}><Doc /><a href={"#" + d}>{d}</a></DocRow>)}
                    </ul>
                    <Section>Recommended</Section>
                    <Section>Most Downloaded</Section>
                  </Widget>
                  <Widget title="Single Sign On Links" pad="12px 14px 12px 29px">
                    <ul>
                      <SsoRow>
                        <span>
                          <svg width="102" height="71" viewBox="0 0 102 71">
                            <path d="M26 15a21 24 0 1 0 18 40" fill="none" stroke="#6aa84f" strokeWidth="11" strokeDasharray="19 2" />
                            <text x="25" y="41" fontFamily="Liberation Sans" fontSize="26" fontWeight="700" fill="#777">Listen</text>
                            <text x="80" y="53" fontFamily="Liberation Sans" fontSize="9" fontWeight="700" fill="#6aa84f">360</text>
                          </svg>
                        </span>
                        <a href="#survey">Customer Survey &amp; Feedback</a>
                      </SsoRow>
                      <SsoRow><span /><a href="#design">DesignOnline</a></SsoRow>
                    </ul>
                  </Widget>
                </Column>
              </Columns>
            </Inner>
          </Container>
          <Dock>
            {dock.map(([label, icon, w]) => <DockButton key={label} $w={w}><DockIcon kind={icon} />{label}</DockButton>)}
            <DockToggle aria-label="Collapse toolbar">
              <svg width="25" height="23" viewBox="0 0 25 23" fill="#fff"><path d="M0 0l12.500 6L25 0v5l-12.500 7L0 5zM0 11l12.500 6L25 11v5l-12.500 7L0 16z" /></svg>
            </DockToggle>
          </Dock>
        </Page>
        <VScroll>
          <ScrollCell aria-label="Scroll up"><Chevron d="M1 9l5-6 5 6" /></ScrollCell>
          <VThumb />
          <Chevron d="M1 3l5 6 5-6" />
        </VScroll>
      </Viewport>
      <HScroll><HThumb /><Chevron d="M3 1l5 5-5 5" s={13} /></HScroll>
      <Taskbar>
        <Start aria-label="Start"><svg width="43" height="43" viewBox="0 0 43 43" fill="#fff"><path d="M0 6l18-2.500V20.500H0zM19.500 3L43 0v20.500H19.500zM0 22h18v17.500L0 37zM19.500 22H43v21l-23.500-3z" /></svg></Start>
        {tasks.map((t) => <Task key={t} aria-label={t} $open={t === "chrome" || t === "chat" || t === "excel"} $front={t === "firefox"}><TaskIcon kind={t} /></Task>)}
        <Tray>
          <svg width="47" height="29" viewBox="0 0 47 29">
            <rect width="47" height="29" rx="2" fill="#fff" /><path d="M5 5h37v19H5z" fill="#333" />
            <path d="M7 8h33M7 13h33M7 18h33" stroke="#fff" strokeWidth="3.500" strokeDasharray="4.200 1.500" /><path d="M13 22h20M7 22h4M35 22h5" stroke="#fff" strokeWidth="2.500" />
          </svg>
          <TrayUp aria-label="Show hidden icons"><svg width="12" height="8" viewBox="0 0 12 8"><path d="M6 0l6 8H0z" fill="#fff" /></svg></TrayUp>
          <svg width="22" height="22" viewBox="0 0 22 22" fill="#fff"><path d="M0 0h2v22H0zM3 1c4-2 6 0 8 1v11c-3-2-5-2-8-1zM12 5c4 2 6 0 9-1-2 4-1 7-4 10-2 1-4 0-5-1z" /></svg>
          <svg width="23" height="24" viewBox="0 0 23 24" fill="#fff"><path d="M1 1h2v5h3V1h2v5h1v5H6v12H3V11H0V6h1zM10 4h3V1h6v3h3v19H10zM13 7v13h6V7z" fillRule="evenodd" /></svg>
          <svg width="20" height="18" viewBox="0 0 20 18" fill="#fff"><path d="M0 14h3v4H0zM4 11h3v7H4zM8 8h3v10H8zM12 4h3v14h-3zM16 0h3v18h-3z" /></svg>
          <Clock>4:51 PM<br />6/5/2018</Clock>
        </Tray>
      </Taskbar>
      <StatusTip>https://jbfsale.com/JBF/control/nexturl?nextUrl=main&amp;menuName=intranet</StatusTip>
      <Recorder>
        <RecGroup $w={86}>
          <svg width="7" height="22" viewBox="0 0 7 22" fill="#454545"><circle cx="3.500" cy="3" r="3" /><circle cx="3.500" cy="11" r="3" /><circle cx="3.500" cy="19" r="3" /></svg>
          <svg width="22" height="22" viewBox="0 0 22 22" fill="none" stroke="#66c12b" strokeWidth="4"><path d="M22 11H3M12 2l-9 9 9 9" /></svg>
        </RecGroup>
        <RecGroup $w={51}><svg width="22" height="23"><rect width="22" height="23" rx="4" fill="#cf0202" /></svg></RecGroup>
        <RecGroup $w={98}>
          <svg width="23" height="23"><path d="M0 0h9v23H0zM13 0h9v23h-9z" fill="#454545" /></svg>
          <svg width="28" height="25" viewBox="0 0 28 25"><path d="M1 1h26v18H1z" fill="#fff" stroke="#454545" strokeWidth="2" /><path d="M0 15h28v5H0zM10 20h8v4h-8z" fill="#454545" /><path d="M12 12a1 1 0 0 1 2 1M12 8q5 0 6 5M12 4q9 0 10 9" stroke="#454545" fill="none" strokeWidth="1.500" /></svg>
        </RecGroup>
        <RecGroup $w={189}><People /><Handset size={20} /><FaComments size={26} /></RecGroup>
        <RecGroup $w={64}><FaPencilAlt size={22} /></RecGroup>
        <RecGroup $w={99}><FaQuestion size={19} /><svg width="20" height="6"><rect width="20" height="6" rx="1" fill="#454545" /></svg></RecGroup>
      </Recorder>
      <Pointer width="14" height="21" viewBox="0 0 14 21"><path d="M1 1v15l4-3 3 7 2-1-3-7h5z" fill="#fff" stroke="#222" /></Pointer>
    </Screen>
  );
}
